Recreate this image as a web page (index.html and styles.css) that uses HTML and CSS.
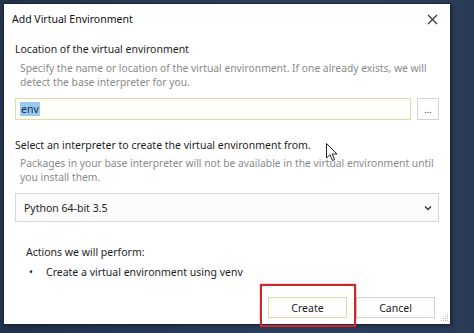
FILE: index.html
```html
<html>
<head>
   <meta charset="utf-8">
   <link rel="stylesheet" href="styles.css">
</head>
<body>
   <div class="dialog">
      <div class="title-bar">
         <span class="title">Add Virtual Environment</span>
         <svg class="close" width="11" height="11" viewBox="0 0 11 11">
            <path d="M1 1 L10 10 M10 1 L1 10" stroke="#333" stroke-width="1.2" fill="none"/>
         </svg>
      </div>
      <div class="content">
         <div class="label">Location of the virtual environment</div>
         <div class="hint">Specify the name or location of the virtual environment. If one already exists, we will<br>detect the base interpreter for you.</div>
         <div class="path-row">
            <div class="path-box"><span class="selected">env</span></div>
            <div class="browse">...</div>
         </div>

         <div class="label label-second">Select an interpreter to create the virtual environment from.</div>
         <div class="hint">Packages in your base interpreter will not be available in the virtual environment until<br>you install them.</div>
         <div class="combo">
            <span>Python 64-bit 3.5</span>
            <svg width="8" height="6" viewBox="0 0 8 6">
               <path d="M1 1.5 L4 4.5 L7 1.5" stroke="#333" stroke-width="1.3" fill="none"/>
            </svg>
         </div>

         <div class="actions">
            <div class="actions-title">Actions we will perform:</div>
            <ul class="action-list">
               <li>Create a virtual environment using venv</li>
            </ul>
         </div>

         <div class="button-row">
            <div class="highlight">
               <div class="btn btn-default">Create</div>
            </div>
            <div class="btn">Cancel</div>
         </div>
      </div>
      <svg class="grip" width="9" height="9" viewBox="0 0 9 9">
         <g fill="#b8b8b8">
            <rect x="7" y="1" width="1" height="1"/>
            <rect x="5" y="3" width="1" height="1"/><rect x="7" y="3" width="1" height="1"/>
            <rect x="3" y="5" width="1" height="1"/><rect x="5" y="5" width="1" height="1"/><rect x="7" y="5" width="1" height="1"/>
            <rect x="1" y="7" width="1" height="1"/><rect x="3" y="7" width="1" height="1"/><rect x="5" y="7" width="1" height="1"/><rect x="7" y="7" width="1" height="1"/>
         </g>
      </svg>
      <!-- mouse pointer in the shot -->
      <svg class="cursor" width="12" height="19" viewBox="0 0 12 19">
         <path d="M0.5 0.5 L0.5 15 L4 11.7 L6.5 17.5 L8.6 16.6 L6.2 11 L11 11 Z" fill="#fff" stroke="#222" stroke-width="1"/>
      </svg>
   </div>
</body>
</html>
```

FILE: styles.css
```css
body {
   margin: 0;
   width: 474px;
   height: 333px;
   overflow: hidden;
   background: linear-gradient(90deg, #22324d 0%, #2c3f5f 60%, #2a3b58 100%);
   font-family: "Noto Sans", "Segoe UI", sans-serif;
   font-size: 10.5px;
   color: #1e1e1e;
}
.dialog {
   position: relative;
   margin: 4px 0 0 4px;
   width: 446px;
   height: 320px;
   background: #fff;
   box-shadow: 0 0 0 1px #1b2537, 2px 2px 4px rgba(0, 0, 0, 0.4);
   display: flex;
   flex-direction: column;
}
.title-bar {
   flex-shrink: 0;
   height: 29px;
   display: flex;
   align-items: center;
   justify-content: space-between;
   padding: 0 12px 0 8px;
}
.title {
   font-size: 10.5px;
   color: #111;
}
.close {
   margin-top: 1px;
}
.content {
   padding: 9px 11px 0 11px;
   display: flex;
   flex-direction: column;
}
.label {
   color: #1e1e1e;
   line-height: 14px;
   white-space: nowrap;
}
.label-second {
   margin-top: 18px;
}
.hint {
   color: #8a8a8a;
   font-size: 10.3px;
   padding-left: 5px;
   line-height: 14px;
   margin-top: 5px;
   white-space: nowrap;
}
.label-second + .hint {
   margin-top: 4px;
}
.path-row {
   flex-shrink: 0;
   display: flex;
   gap: 6px;
   margin-top: 9px;
   height: 22px;
}
.path-box {
   flex: 1;
   border: 1px solid #e5d9a6;
   background: #fffffb;
   display: flex;
   align-items: center;
   padding-left: 4px;
}
.selected {
   background: #99c8f0;
   color: #1a2a4a;
   padding: 0 1px;
   line-height: 14px;
}
.browse {
   width: 20px;
   border: 1px solid #d4d4d4;
   display: flex;
   align-items: center;
   justify-content: center;
   font-size: 9px;
   color: #333;
}
.combo {
   flex-shrink: 0;
   margin-top: 9px;
   height: 27px;
   border: 1px solid #d8d8d8;
   background: #fbfbfb;
   display: flex;
   align-items: center;
   justify-content: space-between;
   padding: 0 6px 0 8px;
   color: #1e1e1e;
}
.actions {
   margin-top: 23px;
   padding-left: 11px;
}
.actions-title {
   line-height: 14px;
}
.action-list {
   list-style: none;
   margin: 6px 0 0 0;
   padding-left: 3px;
   line-height: 14px;
}
.action-list li::before {
   content: "•";
   display: inline-block;
   width: 17px;
}
.button-row {
   flex-shrink: 0;
   margin-top: 18px;
   display: flex;
   justify-content: flex-end;
   padding-right: 4px;
}
.highlight {
   position: relative;
   padding-right: 9px;
}
.highlight::after {
   content: "";
   position: absolute;
   left: -8px;
   right: 0;
   top: -13px;
   bottom: -9px;
   border: 2px solid #c42a30;
   box-shadow: 0 0 2px rgba(180, 30, 30, 0.5);
}
.btn {
   width: 77px;
   height: 19px;
   border: 1px solid #d2d2d2;
   background: #fdfdfd;
   display: flex;
   align-items: center;
   justify-content: center;
}
.btn-default {
   border-color: #e2d6a4;
}
.grip {
   position: absolute;
   right: 1px;
   bottom: 2px;
}
.cursor {
   position: absolute;
   left: 322px;
   top: 139px;
}
```
